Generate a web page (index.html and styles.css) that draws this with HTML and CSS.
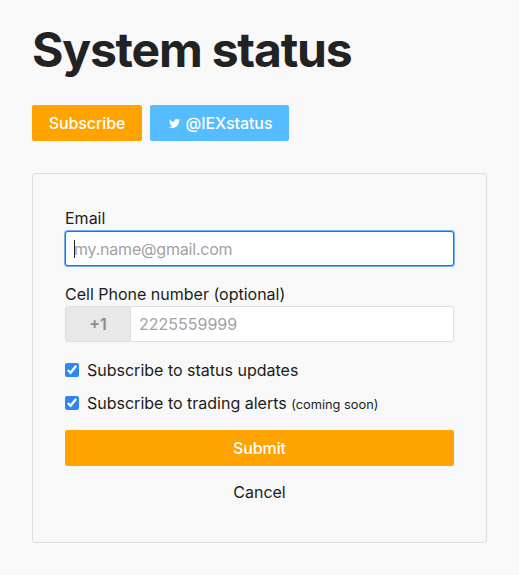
FILE: index.html
```html
<!DOCTYPE html>
<html lang="en">
<head>
    <meta charset="UTF-8">
    <title>System status</title>
    <link rel="stylesheet" href="styles.css">
</head>
<body>
    <div class="page">
        <h1 class="title">System status</h1>

        <div class="actions">
            <a class="button button-orange">Subscribe</a>
            <a class="button button-blue">
                <svg class="twitter" viewBox="0 0 24 24"><path d="M23.953 4.57a10 10 0 01-2.825.775 4.958 4.958 0 002.163-2.723c-.951.555-2.005.959-3.127 1.184a4.92 4.92 0 00-8.384 4.482C7.69 8.095 4.067 6.13 1.64 3.162a4.822 4.822 0 00-.666 2.475c0 1.71.87 3.213 2.188 4.096a4.904 4.904 0 01-2.228-.616v.06a4.923 4.923 0 003.946 4.827 4.996 4.996 0 01-2.212.085 4.936 4.936 0 004.604 3.417 9.867 9.867 0 01-6.102 2.105c-.39 0-.779-.023-1.17-.067a13.995 13.995 0 007.557 2.209c9.053 0 13.998-7.496 13.998-13.985 0-.21 0-.42-.015-.63A9.935 9.935 0 0024 4.59z"/></svg>
                @IEXstatus
            </a>
        </div>

        <form class="card">
            <label class="label" for="email">Email</label>
            <div class="email-wrap">
                <input class="input input-focus" id="email" type="text" placeholder="my.name@gmail.com">
                <span class="caret"></span>
            </div>

            <label class="label label-phone" for="phone">Cell Phone number (optional)</label>
            <div class="phone-group">
                <div class="addon">+1</div>
                <input class="input input-phone" id="phone" type="text" placeholder="2225559999">
            </div>

            <label class="check check-first"><input type="checkbox" checked> Subscribe to status updates</label>
            <label class="check"><input type="checkbox" checked> <span>Subscribe to trading alerts <small>(coming soon)</small></span></label>

            <button class="button button-orange submit" type="button">Submit</button>
            <div class="cancel">Cancel</div>
        </form>
    </div>
</body>
</html>
```

FILE: styles.css
```css
body {
    margin: 0;
    background-color: #f8f8f8;
    color: #1c1c1c;
    font-family: Inter, "Liberation Sans", sans-serif;
    font-size: 16px;
}

.page {
    padding: 0 32px;
}

.title {
    margin: 0;
    padding-top: 22px;
    height: 105px;
    box-sizing: border-box;
    color: #222222;
    font-size: 48px;
    line-height: 56px;
    font-weight: 700;
    letter-spacing: -1.2px;
}

.actions {
    display: flex;
    gap: 8px;
    margin-bottom: 32px;
}

.button {
    display: flex;
    align-items: center;
    justify-content: center;
    gap: 6px;
    height: 36px;
    border: 0;
    border-radius: 2px;
    color: #ffffff;
    font-family: inherit;
    font-size: 16px;
    font-weight: 500;
    letter-spacing: -0.1px;
}

.button-orange {
    background-color: #ffa300;
    width: 110px;
}

.button-blue {
    background-color: #55bcff;
    width: 139px;
    box-sizing: border-box;
    padding-left: 2px;
}

.twitter {
    width: 11px;
    height: 11px;
    fill: #ffffff;
}

.card {
    display: flex;
    flex-direction: column;
    width: 455px;
    height: 370px;
    box-sizing: border-box;
    padding: 34px 32px 0;
    border: 1px solid #dcdcdc;
    border-radius: 3px;
}

.label {
    line-height: 20px;
    height: 23px;
}

.label-phone {
    margin-top: 18px;
    height: 22px;
}

.email-wrap {
    position: relative;
    height: 35px;
}

.input {
    width: 100%;
    height: 36px;
    box-sizing: border-box;
    padding: 0 8px;
    border: 1px solid #e0e0e0;
    border-radius: 3px;
    background-color: #ffffff;
    font-family: inherit;
    font-size: 16px;
    outline: none;
}

.input::placeholder {
    color: #a2a2a2;
}

.input-focus {
    height: 35px;
    border-color: #1a73e8;
    box-shadow: 0 0 0 1px #6cb0f7;
    letter-spacing: -0.2px;
}

.caret {
    position: absolute;
    left: 9px;
    top: 9px;
    width: 1px;
    height: 18px;
    background-color: #222222;
}

.phone-group {
    display: flex;
    height: 36px;
}

.addon {
    display: flex;
    align-items: center;
    justify-content: center;
    width: 65px;
    flex-shrink: 0;
    box-sizing: border-box;
    background-color: #e8e8e8;
    border: 1px solid #e0e0e0;
    border-right: 0;
    border-radius: 3px 0 0 3px;
    color: #8c8c8c;
    font-weight: 600;
}

.input-phone {
    border-radius: 0 3px 3px 0;
}

.check {
    display: flex;
    align-items: center;
    gap: 8px;
    height: 33px;
}

.check-first {
    margin-top: 11px;
}

.check input {
    width: 14px;
    height: 14px;
    margin: 0;
    accent-color: #2f86f6;
}

.check small {
    font-size: 12.8px;
}

.submit {
    width: 100%;
    margin-top: 11px;
}

.cancel {
    margin-top: 16px;
    text-align: center;
    line-height: 20px;
}
```
